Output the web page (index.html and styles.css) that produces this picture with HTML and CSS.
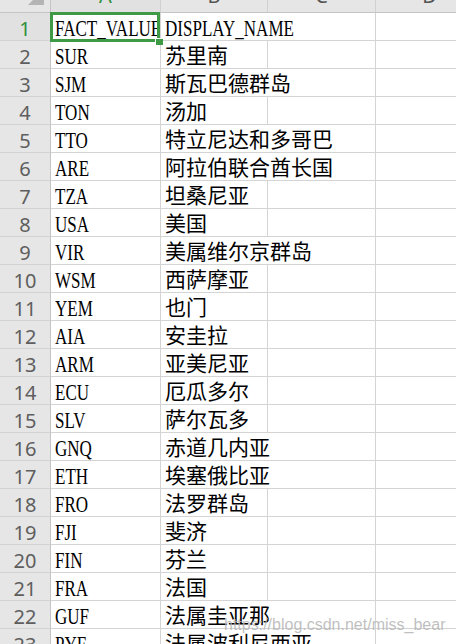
FILE: index.html
```html
<!DOCTYPE html>
<html lang="zh-CN">
<head>
<meta charset="utf-8">
<title>Sheet</title>
<link rel="stylesheet" href="styles.css">
</head>
<body>
<div class="sheet">
  <div class="corner"><svg class="corner-tri" width="16" height="5" viewBox="0 0 16 5"><polygon points="16,-11 16,5 0,5" fill="#b4b4b4"/></svg></div>
  <div class="colhead sel"><span>A</span></div>
  <div class="colhead"><span>B</span></div>
  <div class="colhead"><span>C</span></div>
  <div class="colhead"><span>D</span></div>

  <div class="rowhead sel">1</div>
  <div class="cell active"><span class="lat">FACT_VALUE</span><div class="selbox"></div><div class="handle"></div></div>
  <div class="cell wide"><span class="lat">DISPLAY_NAME</span></div>
  <div class="cell"></div>

  <div class="rowhead">2</div><div class="cell"><span class="lat">SUR</span></div><div class="cell">苏里南</div><div class="cell"></div><div class="cell"></div>
  <div class="rowhead">3</div><div class="cell"><span class="lat">SJM</span></div><div class="cell wide">斯瓦巴德群岛</div><div class="cell"></div>
  <div class="rowhead">4</div><div class="cell"><span class="lat">TON</span></div><div class="cell">汤加</div><div class="cell"></div><div class="cell"></div>
  <div class="rowhead">5</div><div class="cell"><span class="lat">TTO</span></div><div class="cell wide">特立尼达和多哥巴</div><div class="cell"></div>
  <div class="rowhead">6</div><div class="cell"><span class="lat">ARE</span></div><div class="cell wide">阿拉伯联合酋长国</div><div class="cell"></div>
  <div class="rowhead">7</div><div class="cell"><span class="lat">TZA</span></div><div class="cell">坦桑尼亚</div><div class="cell"></div><div class="cell"></div>
  <div class="rowhead">8</div><div class="cell"><span class="lat">USA</span></div><div class="cell">美国</div><div class="cell"></div><div class="cell"></div>
  <div class="rowhead">9</div><div class="cell"><span class="lat">VIR</span></div><div class="cell wide">美属维尔京群岛</div><div class="cell"></div>
  <div class="rowhead">10</div><div class="cell"><span class="lat">WSM</span></div><div class="cell">西萨摩亚</div><div class="cell"></div><div class="cell"></div>
  <div class="rowhead">11</div><div class="cell"><span class="lat">YEM</span></div><div class="cell">也门</div><div class="cell"></div><div class="cell"></div>
  <div class="rowhead">12</div><div class="cell"><span class="lat">AIA</span></div><div class="cell">安圭拉</div><div class="cell"></div><div class="cell"></div>
  <div class="rowhead">13</div><div class="cell"><span class="lat">ARM</span></div><div class="cell">亚美尼亚</div><div class="cell"></div><div class="cell"></div>
  <div class="rowhead">14</div><div class="cell"><span class="lat">ECU</span></div><div class="cell">厄瓜多尔</div><div class="cell"></div><div class="cell"></div>
  <div class="rowhead">15</div><div class="cell"><span class="lat">SLV</span></div><div class="cell">萨尔瓦多</div><div class="cell"></div><div class="cell"></div>
  <div class="rowhead">16</div><div class="cell"><span class="lat">GNQ</span></div><div class="cell wide">赤道几内亚</div><div class="cell"></div>
  <div class="rowhead">17</div><div class="cell"><span class="lat">ETH</span></div><div class="cell wide">埃塞俄比亚</div><div class="cell"></div>
  <div class="rowhead">18</div><div class="cell"><span class="lat">FRO</span></div><div class="cell">法罗群岛</div><div class="cell"></div><div class="cell"></div>
  <div class="rowhead">19</div><div class="cell"><span class="lat">FJI</span></div><div class="cell">斐济</div><div class="cell"></div><div class="cell"></div>
  <div class="rowhead">20</div><div class="cell"><span class="lat">FIN</span></div><div class="cell">芬兰</div><div class="cell"></div><div class="cell"></div>
  <div class="rowhead">21</div><div class="cell"><span class="lat">FRA</span></div><div class="cell">法国</div><div class="cell"></div><div class="cell"></div>
  <div class="rowhead">22</div><div class="cell"><span class="lat">GUF</span></div><div class="cell wide">法属圭亚那</div><div class="cell"></div>
  <div class="rowhead">23</div><div class="cell"><span class="lat">PYF</span></div><div class="cell wide">法属波利尼西亚</div><div class="cell"></div>
  <div class="rowhead">24</div><div class="cell"></div><div class="cell"></div><div class="cell"></div><div class="cell"></div>
</div>
<div class="watermark">https://blog.csdn.net/miss_bear</div>
</body>
</html>
```

FILE: styles.css
```css
html, body {
  margin: 0;
  padding: 0;
  background: #ffffff;
  overflow: hidden;
  width: 456px;
  height: 644px;
}

body {
  position: relative;
}

.sheet {
  display: grid;
  grid-template-columns: 51px 110px 107px 108px 108px;
  grid-template-rows: 13px;
  grid-auto-rows: 28px;
  width: 484px;
}

.corner {
  box-sizing: border-box;
  background: #e6e6e6;
  border-right: 1px solid #c4c4c4;
  border-bottom: 1px solid #c4c4c4;
  display: flex;
  justify-content: flex-end;
  align-items: flex-end;
  padding: 0 6px 7px 0;
  overflow: hidden;
}

.corner-tri {
  display: block;
}

.colhead {
  box-sizing: border-box;
  background: #e6e6e6;
  border-right: 1px solid #d0d0d0;
  border-bottom: 1px solid #c4c4c4;
  overflow: hidden;
  font-family: "Noto Sans", sans-serif;
  font-size: 20px;
  color: #555555;
  text-align: center;
}

.colhead span {
  display: block;
  margin-top: -14px;
  line-height: 20px;
}

.colhead.sel {
  color: #2f8f3a;
  background: #e1e1e1;
}

.rowhead {
  box-sizing: border-box;
  background: #e6e6e6;
  border-right: 1px solid #c4c4c4;
  border-bottom: 1px solid #d2d2d2;
  font-family: "Noto Sans", sans-serif;
  font-size: 20px;
  line-height: 23px;
  padding-top: 4px;
  color: #5e5e5e;
  text-align: center;
  overflow: hidden;
}

.rowhead.sel {
  color: #2f8f3a;
  background: #e1e1e1;
}

.cell {
  box-sizing: border-box;
  border-right: 1px solid #d4d4d4;
  border-bottom: 1px solid #d4d4d4;
  font-family: "Liberation Serif", "Noto Sans CJK SC", serif;
  font-size: 21px;
  line-height: 23px;
  padding: 4px 0 0 4px;
  color: #000000;
  white-space: nowrap;
  overflow: hidden;
}

.cell.wide {
  grid-column: span 2;
}

.cell.active {
  position: relative;
  overflow: visible;
}

.lat {
  display: inline-block;
  font-size: 23px;
  transform: scaleX(0.74);
  transform-origin: left center;
}

.cell.active .lat {
  max-width: 140px;
  overflow: hidden;
  vertical-align: bottom;
}

.selbox {
  position: absolute;
  left: -1px;
  top: -1px;
  width: 110px;
  height: 30px;
  box-sizing: border-box;
  border: 3px solid #3f9a45;
  pointer-events: none;
}

.handle {
  position: absolute;
  left: 104px;
  top: 25px;
  width: 7px;
  height: 6px;
  background: #3f9a45;
  border-left: 1px solid #ffffff;
  border-top: 1px solid #ffffff;
}

.watermark {
  position: absolute;
  left: 224px;
  top: 617px;
  font-family: "Liberation Sans", sans-serif;
  font-size: 16px;
  line-height: 16px;
  color: rgba(180, 180, 180, 0.85);
  white-space: nowrap;
}
```
